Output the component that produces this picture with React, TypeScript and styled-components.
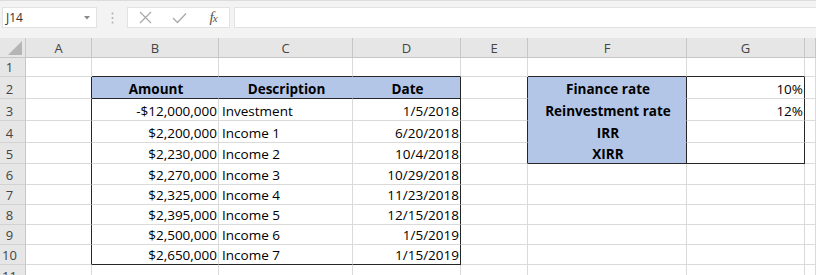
import React from 'react';
import styled, { createGlobalStyle } from 'styled-components';

const GlobalStyle = createGlobalStyle`
  html, body {
    margin: 0;
    padding: 0;
    background: #ffffff;
    overflow: hidden;
  }
  body {
    font-family: "Open Sans", "Liberation Sans", sans-serif;
  }
`;

const COLS = ['A', 'B', 'C', 'D', 'E', 'F', 'G', 'H'];
const ROW_HEIGHTS = [19, 22, 22, 22, 21, 21, 20, 20, 20, 20, 21];

const GRID_LINE = '#dadada';
const BLACK = '#262626';
const BLUE = '#b4c6e7';

const Page = styled.div`
  width: 816px;
  height: 275px;
  overflow: hidden;
  background: #ffffff;
`;

const FormulaBar = styled.div`
  display: flex;
  align-items: stretch;
  height: 38px;
  box-sizing: border-box;
  padding: 6px 0 10px 2px;
  background: #f3f3f3;
  border-top: 1px solid #dcdcdc;
`;

const NameBox = styled.div`
  width: 95px;
  box-sizing: border-box;
  display: flex;
  align-items: center;
  justify-content: space-between;
  padding: 0 6px 0 3px;
  background: #ffffff;
  border: 1px solid #e2e2e2;
  font-size: 12px;
  color: #333333;
`;

const Dots = styled.div`
  width: 30px;
  display: flex;
  align-items: center;
  justify-content: center;
`;

const FxBox = styled.div`
  width: 103px;
  box-sizing: border-box;
  display: flex;
  align-items: center;
  padding: 0 0 0 2px;
  background: #ffffff;
  border: 1px solid #e2e2e2;
`;

const FxSlot = styled.div<{ $w: number }>`
  width: ${(p) => p.$w}px;
  display: flex;
  align-items: center;
  justify-content: center;
`;

const FxText = styled.span`
  font-family: "Liberation Serif", "DejaVu Serif", serif;
  font-style: italic;
  font-size: 15px;
  color: #555555;
  letter-spacing: -1px;

  small {
    font-size: 11px;
  }
`;

const FormulaInput = styled.div`
  flex: 1;
  margin-left: 4px;
  background: #ffffff;
  border: 1px solid #e2e2e2;
  border-right: none;
`;

const Sheet = styled.div`
  display: grid;
  grid-template-columns: 26px 66px 127px 134px 108px 67px 159px 118px 1fr;
  grid-template-rows: 20px ${ROW_HEIGHTS.map((h) => `${h}px`).join(' ')};
`;

const Corner = styled.div`
  background: #e6e6e6;
  border-right: 1px solid #c6c6c6;
  border-bottom: 1px solid #c6c6c6;
  box-sizing: border-box;
  display: flex;
  align-items: flex-end;
  justify-content: flex-end;
  padding: 0 3px 2px 0;
`;

const ColHeader = styled.div`
  background: #e6e6e6;
  border-right: 1px solid #c6c6c6;
  border-bottom: 1px solid #c6c6c6;
  box-sizing: border-box;
  display: flex;
  align-items: center;
  justify-content: center;
  overflow: hidden;
  font-size: 13px;
  color: #444444;
`;

const RowHeader = styled.div`
  background: #e6e6e6;
  border-right: 1px solid #c6c6c6;
  border-bottom: 1px solid #d2d2d2;
  box-sizing: border-box;
  display: flex;
  align-items: flex-end;
  justify-content: center;
  padding: 0 6px 0 0;
  font-size: 13px;
  line-height: 18px;
  color: #444444;
`;

type CellProps = {
  $align: 'left' | 'right' | 'center';
  $bold: boolean;
  $fill: boolean;
  $right: 'grid' | 'black' | 'fill';
  $bottom: 'grid' | 'black' | 'fill';
};

const lineColor = (kind: 'grid' | 'black' | 'fill') =>
  kind === 'black' ? BLACK : kind === 'fill' ? BLUE : GRID_LINE;

const Cell = styled.div<CellProps>`
  box-sizing: border-box;
  display: flex;
  align-items: flex-end;
  justify-content: ${(p) =>
    p.$align === 'left' ? 'flex-start' : p.$align === 'right' ? 'flex-end' : 'center'};
  padding: 0 1px 0 3px;
  background: ${(p) => (p.$fill ? BLUE : '#ffffff')};
  border-right: 1px solid ${(p) => lineColor(p.$right)};
  border-bottom: 1px solid ${(p) => lineColor(p.$bottom)};
  font-size: 13.5px;
  line-height: 17px;
  font-weight: ${(p) => (p.$bold ? 700 : 400)};
  color: #000000;
  white-space: nowrap;
`;

const amounts = [
  ['-$12,000,000', 'Investment', '1/5/2018'],
  ['$2,200,000', 'Income 1', '6/20/2018'],
  ['$2,230,000', 'Income 2', '10/4/2018'],
  ['$2,270,000', 'Income 3', '10/29/2018'],
  ['$2,325,000', 'Income 4', '11/23/2018'],
  ['$2,395,000', 'Income 5', '12/15/2018'],
  ['$2,500,000', 'Income 6', '1/5/2019'],
  ['$2,650,000', 'Income 7', '1/15/2019'],
];

const rates: [string, string][] = [
  ['Finance rate', '10%'],
  ['Reinvestment rate', '12%'],
  ['IRR', ''],
  ['XIRR', ''],
];

const between = (v: number, a: number, b: number) => v >= a && v <= b;

// c: 1 = A ... 8 = H
function cellSpec(r: number, c: number) {
  let text = '';
  let align: 'left' | 'right' | 'center' = 'left';
  let bold = false;

  if (r === 2 && between(c, 2, 4)) {
    text = ['Amount', 'Description', 'Date'][c - 2];
    align = 'center';
    bold = true;
  } else if (between(r, 3, 10) && between(c, 2, 4)) {
    text = amounts[r - 3][c - 2];
    align = c === 3 ? 'left' : 'right';
  } else if (between(r, 2, 5) && c === 6) {
    text = rates[r - 2][0];
    align = 'center';
    bold = true;
  } else if (between(r, 2, 5) && c === 7) {
    text = rates[r - 2][1];
    align = 'right';
  }

  const fill = (r === 2 && between(c, 2, 4)) || (c === 6 && between(r, 2, 5));

  const rightBlack =
    ((c === 1 || c === 4) && between(r, 2, 10)) ||
    (between(c, 5, 7) && between(r, 2, 5));
  const bottomBlack =
    ((r === 1 || r === 2 || r === 10) && between(c, 2, 4)) ||
    ((r === 1 || r === 5) && between(c, 6, 7));

  const right = rightBlack ? 'black' : fill ? 'fill' : 'grid';
  const bottom = bottomBlack ? 'black' : fill ? 'fill' : 'grid';

  return { text, align, bold, fill, right, bottom } as const;
}

const CornerMark = () => (
  <svg width="14" height="14" viewBox="0 0 14 14">
    <polygon points="14,0 14,14 0,14" fill="#b5b5b5" />
  </svg>
);

const Caret = () => (
  <svg width="6" height="4" viewBox="0 0 6 4">
    <polygon points="0,0 6,0 3,3.5" fill="#8a8a8a" />
  </svg>
);

const VDots = () => (
  <svg width="3" height="12" viewBox="0 0 3 12">
    <circle cx="1.5" cy="1.5" r="1" fill="#b0b0b0" />
    <circle cx="1.5" cy="6" r="1" fill="#b0b0b0" />
    <circle cx="1.5" cy="10.5" r="1" fill="#b0b0b0" />
  </svg>
);

const CrossIcon = () => (
  <svg width="13" height="13" viewBox="0 0 13 13">
    <path d="M1 1 L12 12 M12 1 L1 12" stroke="#a8a8a8" strokeWidth="1.2" fill="none" />
  </svg>
);

const CheckIcon = () => (
  <svg width="15" height="12" viewBox="0 0 15 12">
    <path d="M1 6 L5.5 10.5 L14 1.5" stroke="#a8a8a8" strokeWidth="1.3" fill="none" />
  </svg>
);

export default function App() {
  return (
    <Page>
      <GlobalStyle />
      <FormulaBar>
        <NameBox>
          <span>J14</span>
          <Caret />
        </NameBox>
        <Dots>
          <VDots />
        </Dots>
        <FxBox>
          <FxSlot $w={30}>
            <CrossIcon />
          </FxSlot>
          <FxSlot $w={38}>
            <CheckIcon />
          </FxSlot>
          <FxSlot $w={30}>
            <FxText>
              f<small>x</small>
            </FxText>
          </FxSlot>
        </FxBox>
        <FormulaInput />
      </FormulaBar>

      <Sheet>
        <Corner>
          <CornerMark />
        </Corner>
        {COLS.map((col) => (
          <ColHeader key={col}>{col === 'H' ? '' : col}</ColHeader>
        ))}

        {ROW_HEIGHTS.map((_, i) => {
          const r = i + 1;
          return (
            <React.Fragment key={r}>
              <RowHeader>{r}</RowHeader>
              {COLS.map((col, j) => {
                const s = cellSpec(r, j + 1);
                return (
                  <Cell
                    key={col}
                    $align={s.align}
                    $bold={s.bold}
                    $fill={s.fill}
                    $right={s.right}
                    $bottom={s.bottom}
                  >
                    {s.text}
                  </Cell>
                );
              })}
            </React.Fragment>
          );
        })}
      </Sheet>
    </Page>
  );
}
